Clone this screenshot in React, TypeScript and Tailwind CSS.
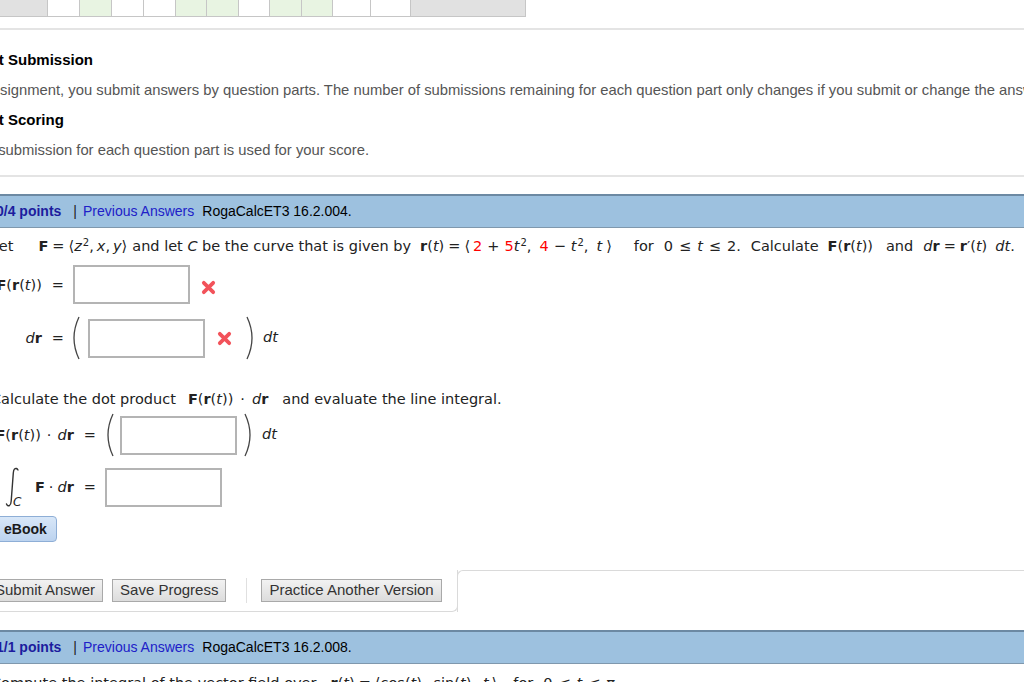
import React from 'react';

const CELLS: { w: number; bg: string }[] = [
  { w: 48, bg: 'bg-[#e1e1e1]' },
  { w: 32, bg: 'bg-white' },
  { w: 32, bg: 'bg-[#e8f4e2]' },
  { w: 32, bg: 'bg-white' },
  { w: 32, bg: 'bg-white' },
  { w: 31, bg: 'bg-[#e8f4e2]' },
  { w: 32, bg: 'bg-[#e8f4e2]' },
  { w: 31, bg: 'bg-white' },
  { w: 32, bg: 'bg-[#e8f4e2]' },
  { w: 31, bg: 'bg-[#e8f4e2]' },
  { w: 38, bg: 'bg-white' },
  { w: 40, bg: 'bg-white' },
  { w: 115, bg: 'bg-[#e1e1e1]' },
];

const sans = { fontFamily: '"Liberation Sans", Arial, sans-serif' };
const math = { fontFamily: '"DejaVu Sans", Verdana, sans-serif' };

const red = 'text-[#f00]';

function RedX() {
  return (
    <svg width="15" height="15" viewBox="0 0 16 16" className="shrink-0">
      <path d="M3 3 L13 13 M13 3 L3 13" stroke="#f2525a" strokeWidth="4" strokeLinecap="round" />
    </svg>
  );
}

function AnswerBox() {
  return <div className="w-[117px] h-[39px] border-2 border-[#b4b4b4] bg-white shrink-0" />;
}

function Paren({ side }: { side: 'l' | 'r' }) {
  return (
    <svg width="10" height="44" viewBox="0 0 10 44" className="shrink-0">
      {side === 'l' ? (
        <path d="M8 1 Q-2 22 8 43" stroke="#444" strokeWidth="1.3" fill="none" />
      ) : (
        <path d="M2 1 Q12 22 2 43" stroke="#444" strokeWidth="1.3" fill="none" />
      )}
    </svg>
  );
}

// operator with the loose spacing the math renderer uses
function Op({ c, wide }: { c: string; wide?: boolean }) {
  return <span className={wide ? 'mx-[6px]' : 'mx-[4px]'}>{c}</span>;
}

function Sq() {
  return <sup className="text-[10px] ml-[1px]">2</sup>;
}

function Bar({ pts, code }: { pts: string; code: string }) {
  return (
    <div className="h-[34px] bg-[#9dc1df] border-t-2 border-t-[#6c89a3] border-b border-b-[#7f98ad] flex items-center text-[14px] whitespace-nowrap" style={sans}>
      <span className="ml-[-4px] font-bold text-[#1c1c9e]">{pts}</span>
      <span className="ml-[12px] text-[#222]">|</span>
      <span className="ml-[6px] text-[#2020c8]">Previous Answers</span>
      <span className="ml-[8px] text-black">{code}</span>
    </div>
  );
}

function Btn({ children }: { children: React.ReactNode }) {
  return (
    <div className="h-[23px] px-[7px] flex items-center border border-[#a9a9a9] bg-gradient-to-b from-[#f2f2f2] to-[#dcdcdc] text-[15px] text-[#333] whitespace-nowrap" style={sans}>
      {children}
    </div>
  );
}

export default function App() {
  return (
    <div className="w-[1024px] h-[682px] overflow-hidden bg-white text-black">
      {/* score grid */}
      <div className="flex h-[17px]">
        {CELLS.map((c, i) => (
          <div key={i} style={{ width: c.w }} className={`${c.bg} h-[17px] border-r border-b border-[#c6c6c6] shrink-0`} />
        ))}
      </div>
      <div className="mt-[11px] h-[2px] bg-[#e4e4e4]" />

      {/* rules */}
      <div className="leading-[20px] whitespace-nowrap" style={sans}>
        <div className="pt-[20px] ml-[-82px] text-[15px] font-bold">Assignment Submission</div>
        <div className="mt-[10px] ml-[-69px] text-[14.8px] text-[#555]">
          For this assignment, you submit answers by question parts. The number of submissions remaining for each question part only changes if you submit or change the answer.
        </div>
        <div className="mt-[10px] ml-[-82px] text-[15px] font-bold">Assignment Scoring</div>
        <div className="mt-[10px] ml-[-63px] text-[14.8px] text-[#555]">
          Your last submission for each question part is used for your score.
        </div>
      </div>
      <div className="mt-[15px] h-[2px] bg-[#e4e4e4]" />

      <div className="mt-[17px]">
        <Bar pts="0/4 points" code="RogaCalcET3 16.2.004." />
      </div>

      {/* question */}
      <div className="ml-[-9px] text-[14.5px] leading-[20px] text-[#222]" style={math}>
        <div className="pt-[8px] whitespace-nowrap">
          Let<span className="ml-[25px]"><b>F</b></span><Op c="=" />⟨<i>z</i><Sq />,<span className="ml-[3px]"><i>x</i></span>,<span className="ml-[3px]"><i>y</i></span>⟩
          <span className="ml-[5px]">and let <i>C</i> be the curve that is given by</span>
          <span className="ml-[9px]"><b>r</b>(<i>t</i>)</span><Op c="=" />⟨<span className={`ml-[3px] ${red}`}>2</span><span className="mx-[5px]">+</span><span className={red}>5</span><i>t</i><Sq />,<span className={`ml-[8px] ${red}`}>4</span><span className="mx-[5px]">−</span><i>t</i><Sq />,<span className="ml-[8px]"><i>t</i></span><span className="ml-[4px]">⟩</span>
          <span className="ml-[22px]">for</span>
          <span className="ml-[10px]">0</span><Op c="≤" wide /><i>t</i><Op c="≤" wide />2.
          <span className="ml-[10px]">Calculate</span>
          <span className="ml-[9px]"><b>F</b>(<b>r</b>(<i>t</i>))</span>
          <span className="ml-[13px]">and</span>
          <span className="ml-[10px]"><i>d</i><b>r</b></span><Op c="=" /><b>r</b>′(<i>t</i>)<span className="ml-[8px]"><i>d</i><i>t</i>.</span>
        </div>

        <div className="mt-[9px] flex items-center">
          <div className="w-[73px] text-right whitespace-nowrap">
            <b>F</b>(<b>r</b>(<i>t</i>))<span className="ml-[10px]">=</span>
          </div>
          <div className="ml-[9px]"><AnswerBox /></div>
          <div className="ml-[11px] mt-[6px]"><RedX /></div>
        </div>

        <div className="mt-[12px] flex items-center">
          <div className="w-[73px] text-right whitespace-nowrap">
            <i>d</i><b>r</b><span className="ml-[10px]">=</span>
          </div>
          <div className="ml-[7px]"><Paren side="l" /></div>
          <div className="ml-[7px]"><AnswerBox /></div>
          <div className="ml-[12px]"><RedX /></div>
          <div className="ml-[13px]"><Paren side="r" /></div>
          <div className="ml-[8px] mb-[2px]"><i>dt</i></div>
        </div>

        <div className="mt-[29px] whitespace-nowrap">
          Calculate the dot product<span className="ml-[12px]"><b>F</b>(<b>r</b>(<i>t</i>))</span><span className="mx-[7px]">·</span><i>d</i><b>r</b>
          <span className="ml-[14px]">and evaluate the line integral.</span>
        </div>

        <div className="mt-[4px] flex items-center">
          <div className="w-[105px] text-right whitespace-nowrap">
            <b>F</b>(<b>r</b>(<i>t</i>))<span className="mx-[6px]">·</span><i>d</i><b>r</b><span className="ml-[10px]">=</span>
          </div>
          <div className="ml-[9px]"><Paren side="l" /></div>
          <div className="ml-[5px]"><AnswerBox /></div>
          <div className="ml-[6px]"><Paren side="r" /></div>
          <div className="ml-[9px] mb-[2px]"><i>dt</i></div>
        </div>

        <div className="mt-[10px] flex items-center">
          <div className="w-[105px] flex items-center justify-end whitespace-nowrap">
            <div className="relative w-[22px] h-[40px] mr-[11px]">
              <svg width="16" height="40" viewBox="0 0 16 40" className="absolute left-[2px] top-0">
                <path d="M14 3 Q12.5 0.5 10.5 2 Q9.5 3 9.3 6 L7.2 34 Q7 37.5 5.5 38.5 Q3.5 39.5 2.5 37" stroke="#333" strokeWidth="1.4" fill="none" strokeLinecap="round" />
              </svg>
              <i className="absolute left-[11px] top-[25px] text-[12px]">C</i>
            </div>
            <b>F</b><Op c="·" /><i>d</i><b>r</b><span className="ml-[10px]">=</span>
          </div>
          <div className="ml-[9px]"><AnswerBox /></div>
        </div>

        <div className="mt-[9px] w-[66px] h-[26px] rounded-[4px] border border-[#8eaed6] bg-gradient-to-b from-[#d8e7f8] to-[#bcd3ef] flex items-center pl-[12px] text-[14px] font-bold text-[#1a1a1a]" style={sans}>
          eBook
        </div>
      </div>

      {/* actions */}
      <div className="mt-[28px] flex h-[42px]">
        <div className="w-[458px] shrink-0 border-r border-b border-[#dadada] rounded-br-[6px] flex items-center">
          <div className="ml-[-13px]"><Btn>Submit Answer</Btn></div>
          <div className="ml-[9px]"><Btn>Save Progress</Btn></div>
          <div className="ml-[20px] w-px h-[25px] bg-[#e0e0e0]" />
          <div className="ml-[14px]"><Btn>Practice Another Version</Btn></div>
        </div>
        <div className="flex-1 border-t border-l border-[#dadada] rounded-tl-[6px] -ml-px" />
      </div>

      <div className="mt-[18px]">
        <Bar pts="1/1 points" code="RogaCalcET3 16.2.008." />
      </div>
      <div className="ml-[-9px] pt-[9px] text-[14.5px] leading-[20px] text-[#222] whitespace-nowrap" style={math}>
        Compute the integral of the vector field over<span className="ml-[14px]"><b>r</b>(<i>t</i>)</span><Op c="=" />⟨cos(<i>t</i>),<span className="ml-[7px]">sin(<i>t</i>)</span>,<span className="ml-[7px]"><i>t</i></span><span className="ml-[3px]">⟩</span>
        <span className="ml-[16px]">for</span><span className="ml-[10px]">0</span><Op c="≤" wide /><i>t</i><Op c="≤" wide />π
      </div>
    </div>
  );
}
